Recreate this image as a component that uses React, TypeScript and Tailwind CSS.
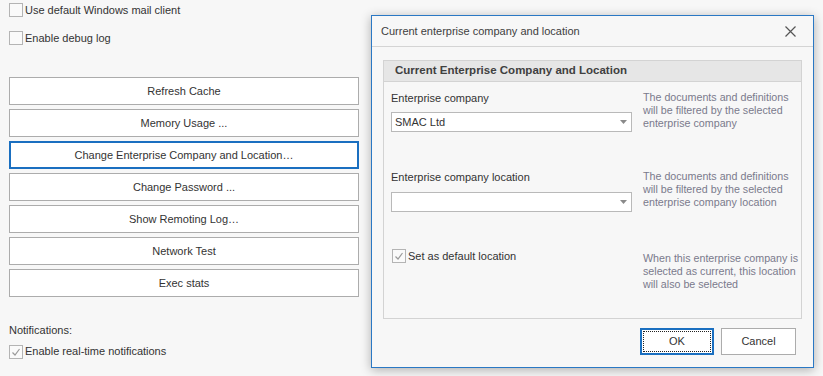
import React from 'react';

const font = { fontFamily: '"Liberation Sans", Arial, sans-serif' };

function Check({ checked, label }: { checked?: boolean; label: string }) {
  return (
    <div className="flex items-center gap-[2px] h-[14px]">
      <div className="w-[14px] h-[14px] border border-[#b4b4b4] bg-[#fafafa] flex items-center justify-center">
        {checked && (
          <svg width="10" height="10" viewBox="0 0 10 10">
            <path d="M1.5 5.5 L4 8 L8.5 2" fill="none" stroke="#9a9a9a" strokeWidth="1.2" />
          </svg>
        )}
      </div>
      <span>{label}</span>
    </div>
  );
}

function Btn({ label, focused }: { label: string; focused?: boolean }) {
  return (
    <div
      className={
        'h-[28px] flex items-center justify-center bg-white ' +
        (focused ? 'border-2 border-[#1a6fc0]' : 'border border-[#acacac]')
      }
    >
      {label}
    </div>
  );
}

function Combo({ value }: { value?: string }) {
  return (
    <div className="w-[241px] h-[20px] bg-white border border-[#b9b9b9] flex items-center justify-between pl-[3px] pr-[4px]">
      <span>{value}</span>
      <svg width="7" height="4" viewBox="0 0 7 4">
        <path d="M0 0 H7 L3.5 4 Z" fill="#8a8a8a" />
      </svg>
    </div>
  );
}

function Note({ lines }: { lines: string[] }) {
  return (
    <div className="w-[155px] text-[10.7px] leading-[13px] text-[#7a7a8c] whitespace-nowrap">
      {lines.map((l) => (
        <div key={l}>{l}</div>
      ))}
    </div>
  );
}

export default function App() {
  const buttons = [
    'Refresh Cache',
    'Memory Usage ...',
    'Change Enterprise Company and Location…',
    'Change Password ...',
    'Show Remoting Log…',
    'Network Test',
    'Exec stats',
  ];
  return (
    <div
      className="relative w-[823px] h-[376px] bg-[#f7f7f7] text-[#333333] text-[11px] overflow-hidden"
      style={font}
    >
      <div className="flex flex-col pl-[9px] pt-[3px] w-[359px]">
        <Check label="Use default Windows mail client" />
        <div className="mt-[14px]">
          <Check label="Enable debug log" />
        </div>
        <div className="mt-[32px] flex flex-col gap-[4px]">
          {buttons.map((b, i) => (
            <Btn key={b} label={b} focused={i === 2} />
          ))}
        </div>
        <div className="mt-[25px]">Notifications:</div>
        <div className="mt-[6px]">
          <Check checked label="Enable real-time notifications" />
        </div>
      </div>

      <div className="absolute left-[371px] top-[15px] w-[443px] h-[353px] border border-[#2a78c4] bg-[#f7f7f7] shadow-[0_2px_10px_rgba(0,0,0,0.3)] flex flex-col">
        <div className="h-[31px] flex items-center justify-between pl-[9px] pr-[17px] border-b border-[#d4d4d4] text-[#404040]">
          <span>Current enterprise company and location</span>
          <svg width="11" height="11" viewBox="0 0 11 11">
            <path d="M0.5 0.5 L10.5 10.5 M10.5 0.5 L0.5 10.5" stroke="#555" strokeWidth="1.2" />
          </svg>
        </div>
        <div className="px-[11px] pt-[13px]">
          <div className="h-[259px] border border-[#d3d3d3] flex flex-col">
            <div className="h-[21px] bg-[#e6e6e6] border-b border-[#d3d3d3] flex items-center pl-[11px] font-bold text-[11.5px] text-[#404040]">
              Current Enterprise Company and Location
            </div>
            <div className="flex flex-col pl-[7px] pr-[3px] pt-[9px]">
              <div className="flex justify-between">
                <div className="flex flex-col gap-[7px]">
                  <span className="leading-[14px]">Enterprise company</span>
                  <Combo value="SMAC Ltd" />
                </div>
                <Note
                  lines={[
                    'The documents and definitions',
                    'will be filtered by the selected',
                    'enterprise company',
                  ]}
                />
              </div>
              <div className="flex justify-between mt-[38px]">
                <div className="flex flex-col gap-[8px]">
                  <span className="leading-[14px]">Enterprise company location</span>
                  <Combo />
                </div>
                <Note
                  lines={[
                    'The documents and definitions',
                    'will be filtered by the selected',
                    'enterprise company location',
                  ]}
                />
              </div>
              <div className="flex justify-between mt-[37px] pl-[1px]">
                <Check checked label="Set as default location" />
                <div className="mt-[3px]">
                  <Note
                    lines={[
                      'When this enterprise company is',
                      'selected as current, this location',
                      'will also be selected',
                    ]}
                  />
                </div>
              </div>
            </div>
          </div>
        </div>
        <div className="flex justify-end gap-[7px] pr-[17px] pt-[9px]">
          <div className="w-[74px] h-[27px] border-2 border-[#1a6fc0] bg-white p-[1px]">
            <div className="w-full h-full border border-dotted border-[#222] flex items-center justify-center">
              OK
            </div>
          </div>
          <div className="w-[75px] h-[27px] border border-[#acacac] bg-white flex items-center justify-center">
            Cancel
          </div>
        </div>
      </div>
    </div>
  );
}
